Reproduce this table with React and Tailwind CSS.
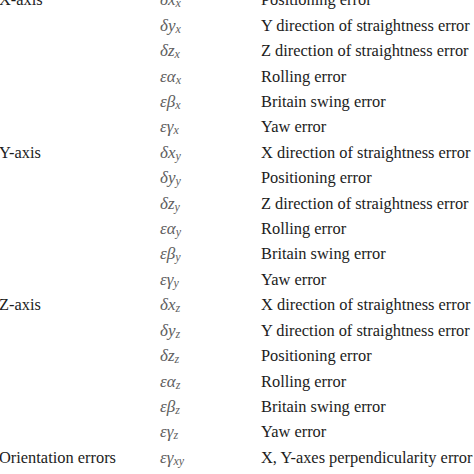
import React from "react";

const SERIF = { fontFamily: '"Liberation Serif", "Times New Roman", serif' };

const rows = [
  ["X-axis", "δx", "x", "Positioning error"],
  ["", "δy", "x", "Y direction of straightness error"],
  ["", "δz", "x", "Z direction of straightness error"],
  ["", "εα", "x", "Rolling error"],
  ["", "εβ", "x", "Britain swing error"],
  ["", "εγ", "x", "Yaw error"],
  ["Y-axis", "δx", "y", "X direction of straightness error"],
  ["", "δy", "y", "Positioning error"],
  ["", "δz", "y", "Z direction of straightness error"],
  ["", "εα", "y", "Rolling error"],
  ["", "εβ", "y", "Britain swing error"],
  ["", "εγ", "y", "Yaw error"],
  ["Z-axis", "δx", "z", "X direction of straightness error"],
  ["", "δy", "z", "Y direction of straightness error"],
  ["", "δz", "z", "Positioning error"],
  ["", "εα", "z", "Rolling error"],
  ["", "εβ", "z", "Britain swing error"],
  ["", "εγ", "z", "Yaw error"],
  ["Orientation errors", "εγ", "xy", "X, Y-axes perpendicularity error"],
];

// italic grey symbol with a lowered subscript
function Symbol({ base, sub }) {
  return (
    <span className="italic text-[17px] text-[#5e5e5e]">
      {base}
      <sub className="text-[12px] relative top-[2px] align-baseline">{sub}</sub>
    </span>
  );
}

export default function App() {
  return (
    <div className="w-[474px] h-[474px] overflow-hidden bg-white">
      <div
        className="mt-[-12.6px] ml-[-1px] grid grid-cols-[161px_101px_1fr] text-[16.4px] leading-[25.4px] text-[#1c1c1c] whitespace-nowrap"
        style={SERIF}
      >
        {rows.map(([axis, base, sub, desc], i) => (
          <React.Fragment key={i}>
            <div>{axis}</div>
            <div>
              <Symbol base={base} sub={sub} />
            </div>
            <div>{desc}</div>
          </React.Fragment>
        ))}
      </div>
    </div>
  );
}
